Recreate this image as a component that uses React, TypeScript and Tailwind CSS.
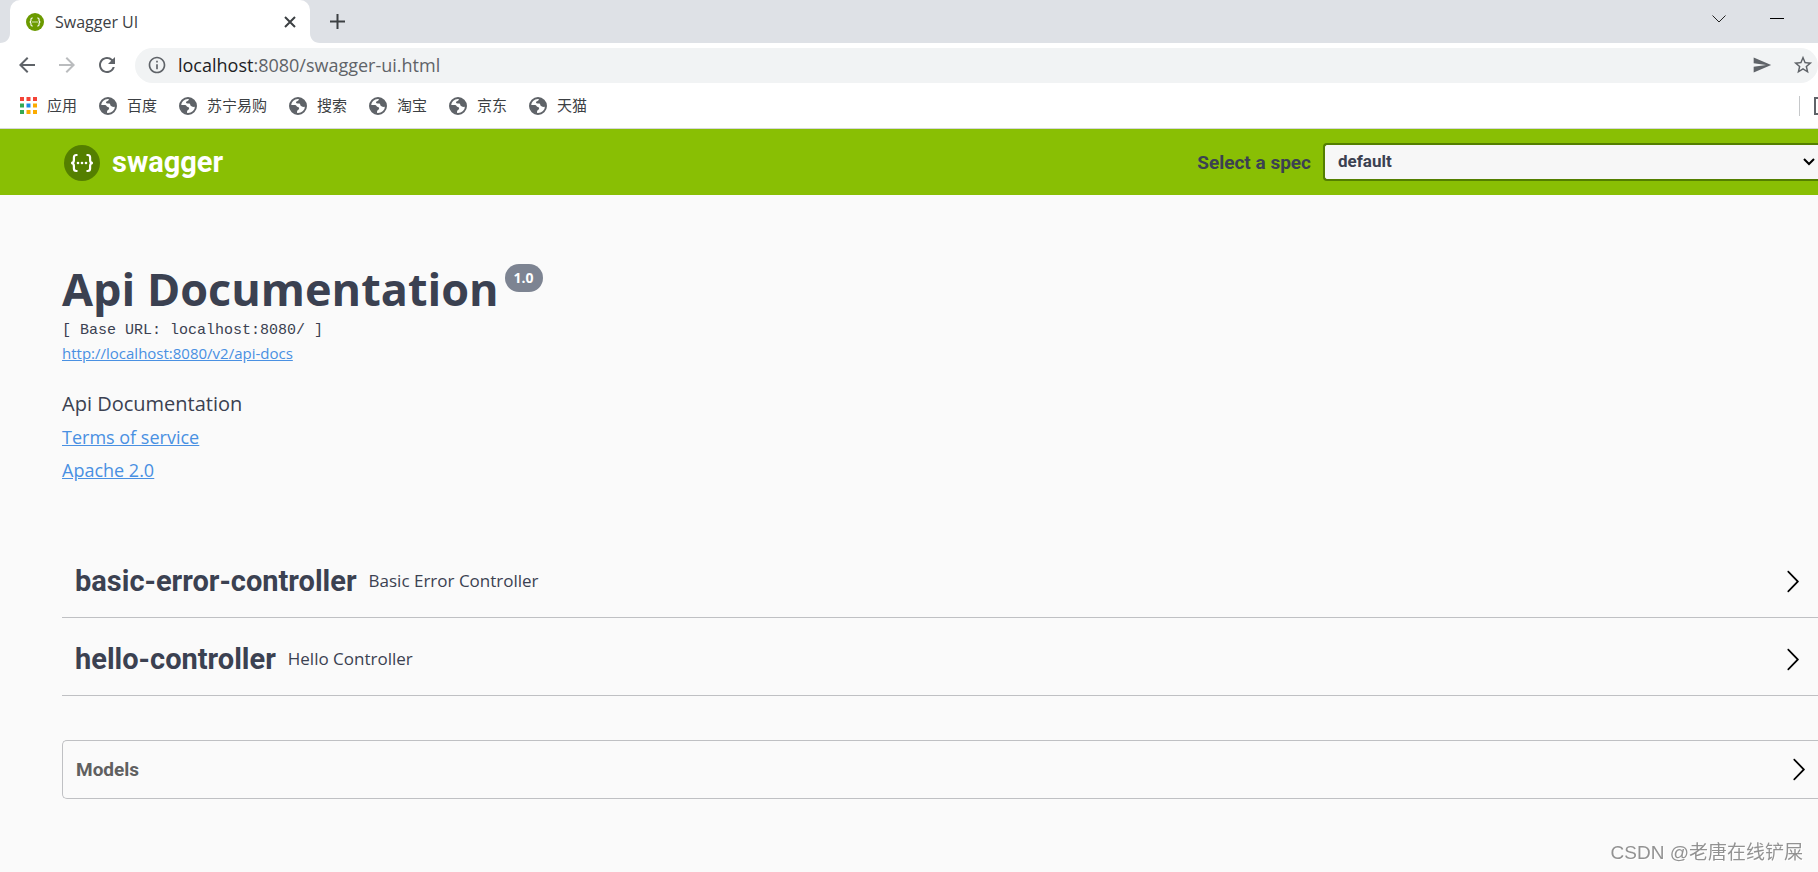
import React, { useState } from 'react';
import { MdArrowBack, MdArrowForward, MdRefresh, MdInfoOutline, MdSend, MdStarBorder } from 'react-icons/md';

const bookmarks = ['百度', '苏宁易购', '搜索', '淘宝', '京东', '天猫'];

const appColors = ['#f44336', '#f44336', '#f44336', '#34a853', '#1e88e5', '#fbab00', '#34a853', '#fbab00', '#fbab00'];

const tags = [
  { name: 'basic-error-controller', description: 'Basic Error Controller' },
  { name: 'hello-controller', description: 'Hello Controller' },
];

const SwaggerMark: React.FC<{ className: string; fill: string }> = ({ className, fill }) => (
  <svg viewBox="0 0 36 36" className={className} aria-hidden="true">
    <circle cx="18" cy="18" r="18" fill={fill} />
    <g fill="none" stroke="#fff" strokeWidth="2.2">
      <path d="M13.5 10h-1.2c-1.8 0-2.4.8-2.4 2.4v2.8c0 1.8-.9 2.8-2.8 2.8 1.9 0 2.8 1 2.8 2.8v2.8c0 1.6.6 2.4 2.4 2.4h1.2" />
      <path d="M22.5 10h1.2c1.8 0 2.4.8 2.4 2.4v2.8c0 1.8.9 2.8 2.8 2.8-1.9 0-2.8 1-2.8 2.8v2.8c0 1.6-.6 2.4-2.4 2.4h-1.2" />
    </g>
    <g fill="#fff">
      <circle cx="14" cy="18" r="1.3" />
      <circle cx="18" cy="18" r="1.3" />
      <circle cx="22" cy="18" r="1.3" />
    </g>
  </svg>
);

const GlobeIcon: React.FC = () => (
  <svg viewBox="0 0 18 18" className="size-[18px] shrink-0 fill-[#5f6368]" aria-hidden="true">
    <circle cx="9" cy="9" r="8" fill="#fff" stroke="#5f6368" strokeWidth="2" />
    <path d="M10 1.5C10 3 9 4 7.5 4.500 6.500 5 7 6.500 8.500 6.500h2C11.500 7 11 8.500 12 9c1 .5 2 1 3 1l1.500-.5V5.500L13 2z" />
    <path d="M1.500 8H6c1.500 0 1.500 2 3 2 1.500 0 1.500 2.500 0 3-1 .3-1 1.500-1 3.500L4 15l-2.500-4z" />
  </svg>
);

const LargeArrow: React.FC = () => (
  <svg viewBox="0 0 20 20" className="size-[25px] shrink-0 fill-black" aria-hidden="true">
    <path d="M13.25 10L6.109 2.58c-.268-.27-.268-.707 0-.979.268-.27.701-.27.969 0l7.83 7.908c.268.271.268.709 0 .979l-7.83 7.908c-.268.271-.701.27-.969 0-.268-.269-.268-.707 0-.979L13.25 10z" />
  </svg>
);

const BrowserChrome: React.FC = () => {
  const [url, setUrl] = useState('localhost:8080/swagger-ui.html');
  const colon = url.indexOf(':');
  const host = colon > 0 ? url.slice(0, colon) : url;
  const rest = colon > 0 ? url.slice(colon) : '';

  return (
    <header className="bg-white font-['Open_Sans','Noto_Sans_CJK_SC',sans-serif] text-[#3c4043]">
      <div className="flex h-[43px] items-end bg-[#dee1e6]">
        <svg viewBox="0 0 10 10" className="size-[10px] fill-white" aria-hidden="true">
          <path d="M10 0v10H0C6 10 10 6 10 0z" />
        </svg>
        <div className="flex h-full w-[300px] items-center rounded-t-[10px] bg-white pl-4 pr-[14px]">
          <SwaggerMark className="size-[18px]" fill="#6b9a00" />
          <span className="ml-[11px] flex-1 text-[16px]">Swagger UI</span>
          <button type="button" aria-label="Close tab">
            <svg viewBox="0 0 12 12" className="size-3 stroke-current stroke-2" aria-hidden="true">
              <path d="M1 1l10 10M11 1L1 11" />
            </svg>
          </button>
        </div>
        <svg viewBox="0 0 10 10" className="size-[10px] fill-white" aria-hidden="true">
          <path d="M0 0v10h10C4 10 0 6 0 0z" />
        </svg>
        <button type="button" aria-label="New tab" className="ml-2.5 self-center">
          <svg viewBox="0 0 15 15" className="size-[15px] stroke-current stroke-2" aria-hidden="true">
            <path d="M7.5 0v15M0 7.5h15" />
          </svg>
        </button>
        <div className="ml-auto flex h-full items-center gap-11 pb-1.5 pr-[34px]">
          <button type="button" aria-label="Search tabs">
            <svg viewBox="0 0 14 8" className="h-2 w-3.5 fill-none stroke-[#222]" aria-hidden="true">
              <path d="M.5.5L7 7 13.5.5" />
            </svg>
          </button>
          <button type="button" aria-label="Minimize">
            <svg viewBox="0 0 14 8" className="h-2 w-3.5 stroke-black" aria-hidden="true">
              <path d="M0 3.5h14" />
            </svg>
          </button>
        </div>
      </div>

      <div className="flex h-11 items-center pl-[15px] text-[#5f6368]">
        <button type="button" aria-label="Back">
          <MdArrowBack className="size-6" />
        </button>
        <button type="button" aria-label="Forward" className="ml-4 text-[#babcbe]">
          <MdArrowForward className="size-6" />
        </button>
        <button type="button" aria-label="Reload" className="ml-4">
          <MdRefresh className="size-6" />
        </button>
        <div className="ml-4 flex h-[35px] flex-1 items-center rounded-full bg-[#f1f3f4] pl-3 pr-1">
          <MdInfoOutline className="size-5" />
          <label className="relative ml-[11px] flex-1 text-[18px] leading-6">
            <span className="pointer-events-none absolute inset-0" aria-hidden="true">
              <span className="text-[#202124]">{host}</span>
              {rest}
            </span>
            <input
              type="text"
              aria-label="Address"
              value={url}
              onChange={(e) => setUrl(e.target.value)}
              className="block w-full bg-transparent text-transparent caret-black focus:outline-none"
            />
          </label>
          <button type="button" aria-label="Share">
            <MdSend className="size-5" />
          </button>
          <button type="button" aria-label="Bookmark this page" className="ml-5">
            <MdStarBorder className="size-[22px]" />
          </button>
        </div>
      </div>

      <nav className="flex h-[42px] items-center gap-[22px] border-b border-[#d5d7da] pb-1 pl-5 text-[15px]">
        <a href="#apps" className="flex items-center gap-[10px]">
          <svg viewBox="0 0 17 17" className="size-[17px]" aria-hidden="true">
            {appColors.map((color, i) => (
              <rect key={i} x={(i % 3) * 6.5} y={Math.floor(i / 3) * 6.5} width="4" height="4" fill={color} />
            ))}
          </svg>
          应用
        </a>
        {bookmarks.map((label) => (
          <a key={label} href="#bookmark" className="flex items-center gap-[10px]">
            <GlobeIcon />
            {label}
          </a>
        ))}
        <div className="ml-auto flex items-center gap-3.5 text-[#5f6368]">
          <span className="h-5 w-px bg-[#c6c8ca]" />
          <span className="h-[18px] w-1 border-2 border-r-0 border-current" />
        </div>
      </nav>
    </header>
  );
};

const App: React.FC = () => {
  const [spec, setSpec] = useState('default');

  return (
    <div className="min-h-screen bg-[#fafafa] font-['Open_Sans',sans-serif] text-[#3b4151]">
      <BrowserChrome />

      <div className="flex h-[66px] items-center bg-[#89bf04] pl-16 font-[Roboto,sans-serif] font-bold">
        <a href="#top" className="flex items-center gap-3 pt-0.5 text-[29px] text-white">
          <SwaggerMark className="size-9" fill="#547f00" />
          swagger
        </a>
        <div className="ml-auto flex items-center gap-3">
          <label htmlFor="spec" className="pt-0.5 text-[19px]">Select a spec</label>
          <div className="relative flex items-center">
            <select
              id="spec"
              value={spec}
              onChange={(e) => setSpec(e.target.value)}
              className="h-[38px] w-[495px] appearance-none rounded-l border-2 border-r-0 border-[#547f00] bg-[#f7f7f7] pl-[13px] text-[17px]"
            >
              <option value="default">default</option>
            </select>
            <svg viewBox="0 0 12 8" className="pointer-events-none absolute right-[3px] h-2 w-3 fill-none stroke-black stroke-2" aria-hidden="true">
              <path d="M1 1l5 5 5-5" />
            </svg>
          </div>
        </div>
      </div>

      <main className="pb-16 pl-[62px]">
        <section className="pt-16">
          <h1 className="flex items-start text-[45px] font-bold leading-[60px]">
            Api Documentation
            <span className="ml-1.5 mt-[5px] rounded-full bg-[#7d8492] px-[9px] text-[14px] leading-7 text-white">1.0</span>
          </h1>
          <pre className="mt-0.5 font-['Liberation_Mono',monospace] text-[15px] leading-5">[ Base URL: localhost:8080/ ]</pre>
          <a href="#api-docs" className="block w-fit text-[15px] leading-6 text-[#4990e2] underline">
            http://localhost:8080/v2/api-docs
          </a>
          <p className="mt-[23px] text-[20px] leading-8">Api Documentation</p>
          <div className="flex flex-col items-start pt-px text-[18px] leading-[33px] text-[#4990e2] underline">
            <a href="#terms">Terms of service</a>
            <a href="#license">Apache 2.0</a>
          </div>
        </section>

        <section className="mt-[58px] flex flex-col gap-[5px]">
          {tags.map((tag) => (
            <button
              key={tag.name}
              type="button"
              className="flex h-[73px] items-center border-b border-[#bfc0c3] pl-[13px] pr-[13px] text-left"
            >
              <span className="pt-0.5 font-[Roboto,sans-serif] text-[29px] font-bold">{tag.name}</span>
              <span className="ml-3 flex-1 text-[17px]">{tag.description}</span>
              <LargeArrow />
            </button>
          ))}
        </section>

        <button
          type="button"
          className="mt-11 flex h-[59px] w-full items-center justify-between rounded-l-[5px] border border-r-0 border-[#bfc0c3] pl-[13px] pr-[7px]"
        >
          <span className="pt-0.5 font-[Roboto,sans-serif] text-[19px] font-bold text-[#606060]">Models</span>
          <LargeArrow />
        </button>
      </main>

      <div className="pointer-events-none fixed bottom-[5px] right-[15px] font-['Liberation_Sans','Noto_Sans_CJK_SC',sans-serif] text-[19px] text-[#929292] [text-shadow:1px_1px_0_#fff]">
        CSDN @老唐在线铲屎
      </div>
    </div>
  );
};

export default App;
